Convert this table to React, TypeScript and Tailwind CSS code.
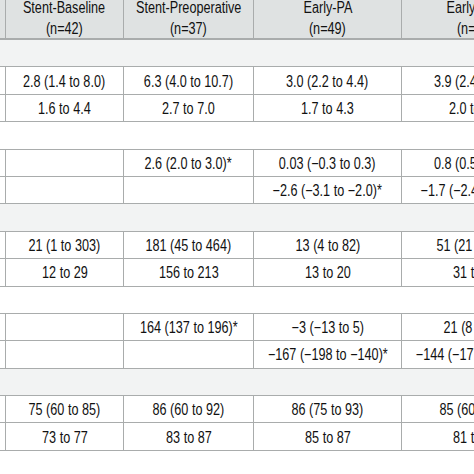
const cols = "grid grid-cols-[5px_118px_130px_148px_148px]";

type Row =
  | { kind: "section"; tone: "gray" | "white" }
  | { kind: "data"; cells: string[] };

const rows: Row[] = [
  { kind: "section", tone: "gray" },
  { kind: "data", cells: ["2.8 (1.4 to 8.0)", "6.3 (4.0 to 10.7)", "3.0 (2.2 to 4.4)", "3.9 (2.4 to 6.0)"] },
  { kind: "data", cells: ["1.6 to 4.4", "2.7 to 7.0", "1.7 to 4.3", "2.0 to 6.1"] },
  { kind: "section", tone: "white" },
  { kind: "data", cells: ["", "2.6 (2.0 to 3.0)*", "0.03 (\u22120.3 to 0.3)", "0.8 (0.5 to 1.1)"] },
  { kind: "data", cells: ["", "", "\u22122.6 (\u22123.1 to \u22122.0)*", "\u22121.7 (\u22122.4 to \u22121.0)*"] },
  { kind: "section", tone: "gray" },
  { kind: "data", cells: ["21 (1 to 303)", "181 (45 to 464)", "13 (4 to 82)", "51 (21 to 120)"] },
  { kind: "data", cells: ["12 to 29", "156 to 213", "13 to 20", "31 to 69"] },
  { kind: "section", tone: "white" },
  { kind: "data", cells: ["", "164 (137 to 196)*", "\u22123 (\u221213 to 5)", "21 (8 to 35)"] },
  { kind: "data", cells: ["", "", "\u2212167 (\u2212198 to \u2212140)*", "\u2212144 (\u2212177 to \u2212112)*"] },
  { kind: "section", tone: "gray" },
  { kind: "data", cells: ["75 (60 to 85)", "86 (60 to 92)", "86 (75 to 93)", "85 (60 to 90)"] },
  { kind: "data", cells: ["73 to 77", "83 to 87", "85 to 87", "81 to 88"] },
];

const headers = [
  ["Stent-Baseline", "(n=42)"],
  ["Stent-Preoperative", "(n=37)"],
  ["Early-PA", "(n=49)"],
  ["Early-PAB", "(n=28)"],
];

// condensed look: no narrow face is installed, so squeeze Liberation Sans
const squeeze = "inline-block whitespace-nowrap scale-x-[0.79]";

export default function App() {
  return (
    <div
      className="w-[474px] h-[474px] overflow-hidden bg-white text-[#111111] text-[16px] leading-none"
      style={{ fontFamily: '"Liberation Sans", Arial, sans-serif' }}
    >
      <div className="w-[549px]">
        <div className={`${cols} h-[40px] bg-[#dfe2e2] border-b-2 border-[#a9acac]`}>
          <div />
          {headers.map(([title, n]) => (
            <div
              key={title}
              className="flex flex-col items-center justify-center gap-[5px] border-l-[1.5px] border-[#a9acac] pb-[2px]"
            >
              <span className={squeeze}>{title}</span>
              <span className={squeeze}>{n}</span>
            </div>
          ))}
        </div>

        {rows.map((row, i) =>
          row.kind === "section" ? (
            <div
              key={`section-${i}`}
              className={`h-[27.4px] border-b-[1.5px] border-[#a9acac] ${
                row.tone === "gray" ? "bg-[#f2f3f3]" : "bg-white"
              }`}
            />
          ) : (
            <div key={`row-${i}`} className={`${cols} h-[27.4px] border-b-[1.5px] border-[#a9acac]`}>
              <div />
              {row.cells.map((cell, j) => (
                <div
                  key={j}
                  className="flex items-center justify-center border-l-[1.5px] border-[#a9acac] pt-[2px]"
                >
                  <span className={squeeze}>{cell}</span>
                </div>
              ))}
            </div>
          )
        )}
      </div>
    </div>
  );
}
